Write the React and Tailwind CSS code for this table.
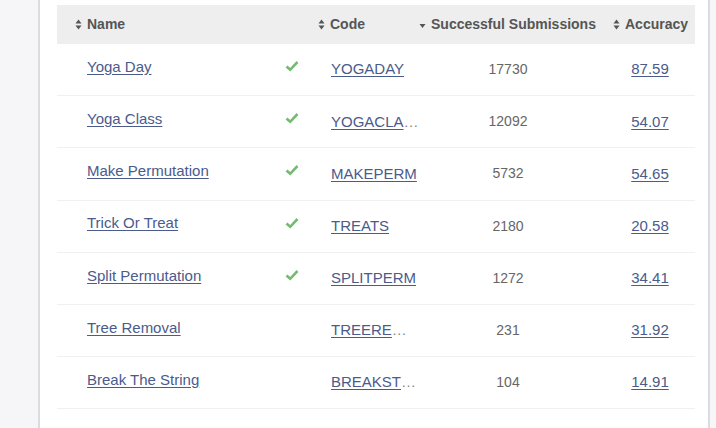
const problems = [
  { name: 'Yoga Day', solved: true, code: 'YOGADAY', subs: '17730', acc: '87.59' },
  { name: 'Yoga Class', solved: true, code: 'YOGACLASS', subs: '12092', acc: '54.07' },
  { name: 'Make Permutation', solved: true, code: 'MAKEPERM', subs: '5732', acc: '54.65' },
  { name: 'Trick Or Treat', solved: true, code: 'TREATS', subs: '2180', acc: '20.58' },
  { name: 'Split Permutation', solved: true, code: 'SPLITPERM', subs: '1272', acc: '34.41' },
  { name: 'Tree Removal', solved: false, code: 'TREEREMOVAL', subs: '231', acc: '31.92' },
  { name: 'Break The String', solved: false, code: 'BREAKSTRING', subs: '104', acc: '14.91' },
];

function SortBoth() {
  return (
    <svg width="7" height="11" viewBox="0 0 7 11" className="shrink-0">
      <path d="M3.5 0.5 L6.5 4.5 L0.5 4.5 Z" fill="#555" />
      <path d="M3.5 10.5 L6.5 6.5 L0.5 6.5 Z" fill="#555" />
    </svg>
  );
}

function SortDown() {
  return (
    <svg width="7" height="11" viewBox="0 0 7 11" className="shrink-0">
      <path d="M3.5 9 L6.5 5 L0.5 5 Z" fill="#555" />
    </svg>
  );
}

function Check() {
  return (
    <svg width="14" height="12" viewBox="0 0 14 12">
      <path d="M1.5 6.5 L5.2 9.8 L12.5 2" fill="none" stroke="#74bb71" strokeWidth="2.6" />
    </svg>
  );
}

const cols = 'grid grid-cols-[218px_31px_113px_186px_90px]';

export default function App() {
  return (
    <div className="w-[716px] h-[428px] bg-[#f6f6f8] overflow-hidden" style={{ fontFamily: '"Liberation Sans", Arial, sans-serif' }}>
      <div className="ml-[38px] w-[672px] h-[440px] bg-white border-l-[2px] border-r-[2px] border-[#dcdce0] pt-[5px] pl-[17px]">
        <div className="w-[638px]">
          {/* Header */}
          <div className={`${cols} h-[39px] bg-[#eeeeee] text-[14px] font-bold text-[#555]`}>
            <div className="flex items-center gap-[5px] pl-[18px]">
              <SortBoth />
              <span>Name</span>
            </div>
            <div />
            <div className="flex items-center gap-[5px] pl-[12px]">
              <SortBoth />
              <span>Code</span>
            </div>
            <div className="flex items-center gap-[5px]">
              <SortDown />
              <span>Successful Submissions</span>
            </div>
            <div className="flex items-center gap-[5px] pl-[8px]">
              <SortBoth />
              <span>Accuracy</span>
            </div>
          </div>

          {/* Rows */}
          {problems.map((p) => (
            <div key={p.code} className={`${cols} h-[52.2px] border-b border-[#f0f0f2] text-[15px]`}>
              <div className="flex items-center pl-[30px] pb-[5px]">
                <a className="text-[#4a5b8c] underline underline-offset-2">{p.name}</a>
              </div>
              <div className="flex items-center justify-center pb-[7px] pl-[2px]">
                {p.solved && <Check />}
              </div>
              <div className="flex items-center pl-[25px]">
                <div className="w-[88px] truncate text-[#888]">
                  <a className="text-[#4a5b8c] underline underline-offset-2">{p.code}</a>
                </div>
              </div>
              <div className="flex items-center justify-center pr-[8px] text-[14px] text-[#666]">
                {p.subs}
              </div>
              <div className="flex items-center justify-center">
                <a className="text-[#4a5b8c] underline underline-offset-2">{p.acc}</a>
              </div>
            </div>
          ))}
        </div>
      </div>
    </div>
  );
}
